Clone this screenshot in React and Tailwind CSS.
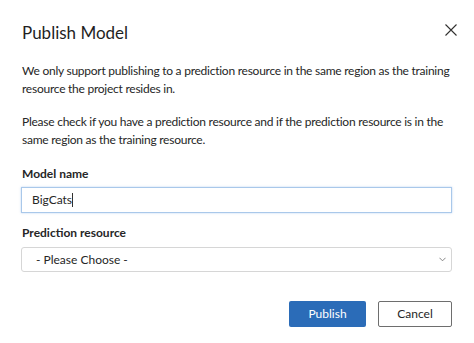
export default function App() {
  return (
    <div
      className="w-[474px] h-[343px] bg-white text-[#262626] px-[22px] pt-[21px] overflow-hidden"
      style={{ fontFamily: 'Lato, "Noto Sans", sans-serif' }}
    >
      <div className="flex items-start justify-between">
        <h1 className="text-[17px] leading-[24px] text-[#1f1f1f]">Publish Model</h1>
        <button className="mt-[3px] mr-[-5px] w-[12px] h-[12px] text-[#323130]">
          <svg viewBox="0 0 12 12" width="12" height="12" fill="none" stroke="currentColor" strokeWidth="1.1">
            <path d="M0.5 0.5 L11.5 11.5 M11.5 0.5 L0.5 11.5" />
          </svg>
        </button>
      </div>

      <p className="mt-[17px] text-[12px] leading-[18px] tracking-[-0.25px]">
        We only support publishing to a prediction resource in the same region as the training resource the project resides in.
      </p>
      <p className="mt-[15px] text-[12px] leading-[18px] tracking-[-0.25px]">
        Please check if you have a prediction resource and if the prediction resource is in the same region as the training resource.
      </p>

      <label className="block mt-[16px] text-[12px] leading-[18px] font-bold">Model name</label>
      <div className="mt-[4px] h-[26px] w-[431px] ml-[-1px] border border-[#a9c8ea] shadow-[0_0_2px_rgba(120,170,230,0.5)] flex items-center pl-[10px] text-[12px]">
        <span>BigCats</span>
        <span className="w-px h-[14px] bg-[#323130]" />
      </div>

      <label className="block mt-[11px] text-[12px] leading-[18px] font-bold">Prediction resource</label>
      <div className="mt-[5px] h-[25px] w-[431px] ml-[-1px] border border-[#d6d6d6] rounded-[3px] flex items-center justify-between pl-[14px] pr-[5px] text-[12px]">
        <span>- Please Choose -</span>
        <svg viewBox="0 0 8 5" width="7" height="5" fill="none" stroke="#777" strokeWidth="1">
          <path d="M0.5 0.5 L4 4 L7.5 0.5" />
        </svg>
      </div>

      <div className="mt-[29px] flex justify-end gap-[12px]">
        <button className="h-[26px] w-[77px] bg-[#2b6cb8] text-white text-[12px] rounded-[2px]">Publish</button>
        <button className="h-[26px] w-[74px] bg-white border border-[#6e6e6e] text-[12px] rounded-[2px]">Cancel</button>
      </div>
    </div>
  );
}
